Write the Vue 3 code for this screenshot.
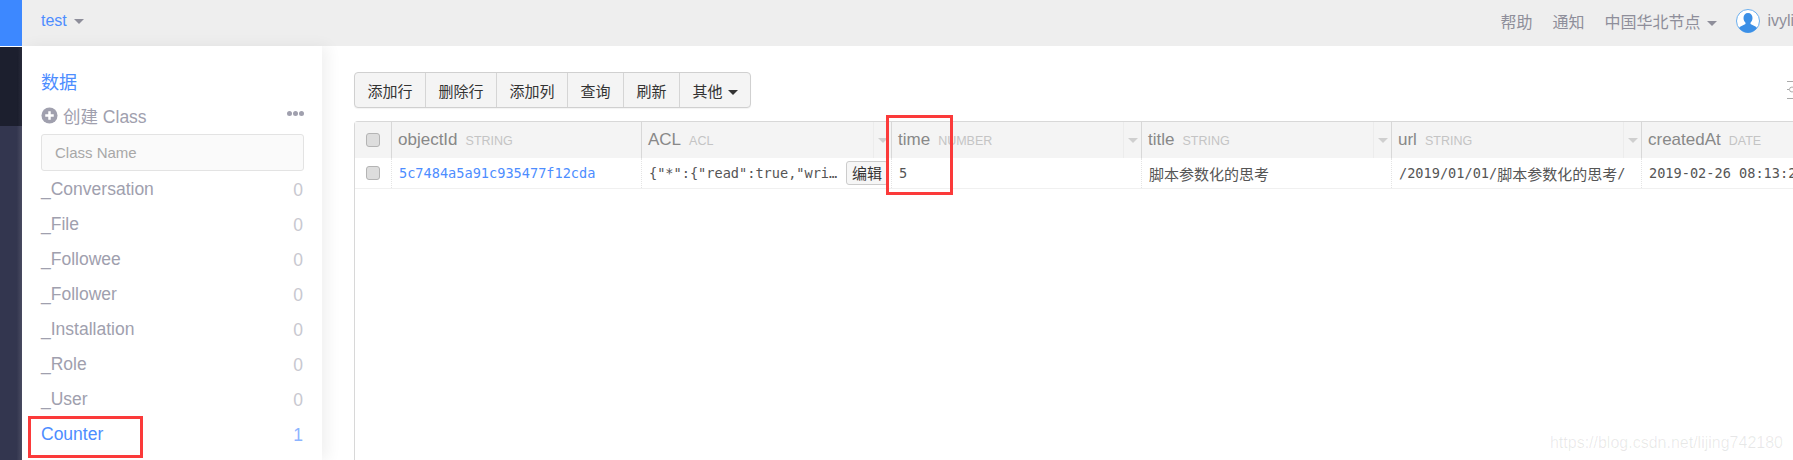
<script setup>
const classes = [
  { name: '_Conversation', count: 0 },
  { name: '_File', count: 0 },
  { name: '_Followee', count: 0 },
  { name: '_Follower', count: 0 },
  { name: '_Installation', count: 0 },
  { name: '_Role', count: 0 },
  { name: '_User', count: 0 },
  { name: 'Counter', count: 1, active: true },
]

const actions = ['添加行', '删除行', '添加列', '查询', '刷新']

const columns = [
  { name: 'objectId', type: 'STRING', noCaret: true },
  { name: 'ACL', type: 'ACL' },
  { name: 'time', type: 'NUMBER' },
  { name: 'title', type: 'STRING' },
  { name: 'url', type: 'STRING' },
  { name: 'createdAt', type: 'DATE' },
]
</script>

<template>
  <div class="page">
    <aside class="rail">
      <div class="rail-logo"></div>
      <div class="rail-dark"></div>
      <div class="rail-rest"></div>
    </aside>

    <div class="main">
      <header class="topbar">
        <a class="app-name">test<i class="caret"></i></a>
        <nav class="topnav">
          <span>帮助</span>
          <span>通知</span>
          <span>中国华北节点<i class="caret"></i></span>
          <span class="user">
            <svg class="avatar" viewBox="0 0 24 24" width="24" height="24">
              <circle cx="12" cy="12" r="11.500" fill="#fff" stroke="#6aaeee" stroke-width="1" />
              <path d="M12 4c-2.800 0-4.500 2.100-4.500 4.900 0 2 .9 3.700 2 4.800v1.400l-4.900 2.300c-.7.300-1.200.8-1.400 1.500a10.500 10.500 0 0 0 17.600 0c-.2-.7-.7-1.200-1.400-1.500l-4.900-2.300v-1.400c1.100-1.100 2-2.800 2-4.800 0-2.800-1.700-4.900-4.500-4.900z" fill="#3b8fe6" />
            </svg>
            ivylijing
          </span>
        </nav>
      </header>

      <div class="body">
        <section class="sidebar">
          <h2 class="side-title">数据</h2>
          <div class="create-row">
            <span class="create">
              <svg viewBox="0 0 18 18" width="17" height="17">
                <circle cx="9" cy="9" r="8.500" fill="#a0a0ae" />
                <path d="M9 4.500v9M4.500 9h9" stroke="#fff" stroke-width="2.600" />
              </svg>
              创建 Class
            </span>
            <span class="dots"><i></i><i></i><i></i></span>
          </div>
          <input class="class-input" placeholder="Class Name" />
          <ul class="class-list">
            <li v-for="c in classes" :key="c.name" :class="{ active: c.active }">
              <span>{{ c.name }}</span>
              <span class="count">{{ c.count }}</span>
            </li>
          </ul>
        </section>

        <section class="content">
          <div class="toolbar-row">
            <div class="btn-group">
              <button v-for="a in actions" :key="a">{{ a }}</button>
              <button>其他<i class="caret dark"></i></button>
            </div>
            <svg class="side-icon" viewBox="0 0 6 18" width="6" height="18">
              <path d="M0 .5h6M0 8.500h2M0 17.500h6" stroke="#aaa" fill="none" />
              <circle cx="5" cy="8.500" r="2.500" stroke="#aaa" fill="none" />
            </svg>
          </div>

          <div class="grid">
            <div class="grid-row head">
              <div class="check-cell"><span class="checkbox"></span></div>
              <div v-for="col in columns" :key="col.name" class="head-cell">
                <span class="col-name">{{ col.name }}</span>
                <span class="col-type">{{ col.type }}</span>
                <span v-if="!col.noCaret" class="col-menu"><i class="caret light"></i></span>
              </div>
            </div>
            <div class="grid-row data">
              <div class="check-cell"><span class="checkbox"></span></div>
              <div class="cell link">5c7484a5a91c935477f12cda</div>
              <div class="cell acl">
                <span class="acl-text">{"*":{"read":true,"write":true}}</span>
                <button class="edit">编辑</button>
              </div>
              <div class="cell">5</div>
              <div class="cell"><span class="cjk">脚本参数化的思考</span></div>
              <div class="cell">/2019/01/01/<span class="cjk">脚本参数化的思考</span>/</div>
              <div class="cell">2019-02-26 08:13:21</div>
            </div>
          </div>
        </section>
      </div>
    </div>

    <!-- red annotation boxes added over the screenshot -->
    <div class="mark mark-counter"></div>
    <div class="mark mark-time"></div>
    <div class="watermark">https://blog.csdn.net/lijing742180</div>
  </div>
</template>

<style>
html, body {
  margin: 0;
  background: #fff;
  overflow: hidden;
}
</style>

<style scoped>
.page {
  position: relative;
  display: flex;
  width: 1793px;
  height: 460px;
  overflow: hidden;
  background: #fff;
  font-family: "Liberation Sans", "Noto Sans CJK SC", sans-serif;
}

.rail {
  flex: 0 0 22px;
  display: flex;
  flex-direction: column;
}
.rail-logo {
  height: 46px;
  background: #3d88ff;
  border-bottom: 1px solid #fff;
}
.rail-dark {
  height: 79px;
  background: linear-gradient(90deg, #1c1f2e 80%, #2a2c3b 100%);
}
.rail-rest {
  flex: 1;
  background: linear-gradient(90deg, #33364f 75%, #4a4c62 100%);
}

.main {
  flex: 1;
  min-width: 0;
  display: flex;
  flex-direction: column;
}

.topbar {
  flex: 0 0 46px;
  box-sizing: border-box;
  display: flex;
  align-items: center;
  justify-content: space-between;
  padding: 0 0 5px 19px;
  background: #eeeeee;
  font-size: 16px;
}
.app-name {
  color: #4d8dff;
}
.topnav {
  display: flex;
  align-items: center;
  gap: 20px;
  color: #8e8e9a;
  font-size: 16px;
  white-space: nowrap;
  margin-right: -26px;
}
.user {
  display: flex;
  align-items: center;
  gap: 7px;
  margin-left: -1px;
}
.caret {
  display: inline-block;
  margin-left: 7px;
  vertical-align: 2px;
  border-left: 5px solid transparent;
  border-right: 5px solid transparent;
  border-top: 5px solid #8e8e9a;
}
.caret.dark {
  margin-left: 5px;
  border-top-color: #333;
}
.caret.light {
  margin: 0;
  border-top-color: #cfcfcf;
}

.body {
  flex: 1;
  display: flex;
  min-height: 0;
}

.sidebar {
  flex: 0 0 300px;
  box-sizing: border-box;
  padding: 25px 18px 0 19px;
  background: #fff;
  box-shadow: 6px 0 14px rgba(0, 0, 0, 0.06);
  z-index: 1;
}
.side-title {
  margin: 0;
  color: #4d8dff;
  font-size: 18px;
  font-weight: normal;
  line-height: 24px;
}
.create-row {
  display: flex;
  align-items: center;
  justify-content: space-between;
  margin-top: 8px;
  height: 24px;
  color: #a0a0ae;
  font-size: 17.500px;
}
.create {
  display: flex;
  align-items: center;
  gap: 5px;
}
.dots {
  display: flex;
  gap: 1px;
  margin-bottom: 3px;
}
.dots i {
  width: 5px;
  height: 5px;
  border-radius: 50%;
  background: #a0a0ae;
}
.class-input {
  display: block;
  box-sizing: border-box;
  width: 263px;
  height: 37px;
  margin-top: 7px;
  padding: 0 13px;
  background: #fafafa;
  border: 1px solid #e3e3e3;
  border-radius: 3px;
  font: 15px "Liberation Sans", sans-serif;
  outline: none;
}
.class-input::placeholder {
  color: #a8a8a8;
  opacity: 1;
}
.class-list {
  list-style: none;
  margin: 1px 0 0;
  padding: 0;
}
.class-list li {
  display: flex;
  align-items: center;
  justify-content: space-between;
  height: 35px;
  color: #a0a0ae;
  font-size: 17.500px;
}
.class-list .count {
  margin-right: 1px;
  margin-top: 2px;
  color: #c8c8d0;
}
.class-list li.active {
  color: #4d8dff;
}
.class-list li.active .count {
  color: #8cb4ff;
}

.content {
  flex: 1;
  min-width: 0;
  padding: 26px 0 0 32px;
}
.toolbar-row {
  display: flex;
  justify-content: space-between;
}
.btn-group {
  display: flex;
  height: 36px;
  box-sizing: border-box;
  border: 1px solid #d0d0d0;
  border-radius: 4px;
  background: #f4f4f4;
  box-shadow: 0 1px 1px rgba(0, 0, 0, 0.05);
}
.btn-group button {
  padding: 0 12.500px;
  border: 0;
  border-right: 1px solid #d5d5d5;
  background: none;
  color: #333;
  font: 15px "Noto Sans CJK SC", sans-serif;
  white-space: nowrap;
}
.btn-group button:last-child {
  border-right: 0;
}
.side-icon {
  margin-top: 9px;
}

.grid {
  width: 1500px;
  height: 400px;
  margin-top: 13px;
  border: 1px solid #d8d8d8;
  border-right: 0;
  border-radius: 4px 0 0 0;
}
.grid-row {
  display: flex;
}
.grid-row.head {
  height: 36px;
  background: #f4f4f4;
}
.grid-row.data {
  height: 30px;
  border-bottom: 1px solid #f0f0f0;
}
.check-cell {
  flex: 0 0 36px;
  display: flex;
  align-items: center;
  justify-content: center;
  box-sizing: border-box;
}
.checkbox {
  width: 12px;
  height: 12px;
  border: 1px solid #b4b4b4;
  border-radius: 3px;
  background: #ddd;
}
.head-cell {
  position: relative;
  flex: 0 0 250px;
  display: flex;
  align-items: center;
  box-sizing: border-box;
  padding-left: 6px;
  border-left: 1px solid #d8d8d8;
}
.col-name {
  color: #888;
  font-size: 17px;
}
.col-type {
  margin-left: 8px;
  margin-top: 2px;
  color: #c4c4c4;
  font-size: 12.500px;
}
.col-menu {
  position: absolute;
  top: 0;
  right: 0;
  bottom: 0;
  width: 17px;
  display: flex;
  align-items: center;
  justify-content: center;
  border-left: 1px solid #ececec;
}
.cell {
  flex: 0 0 250px;
  display: flex;
  align-items: center;
  box-sizing: border-box;
  padding-left: 7px;
  border-left: 1px dotted #e4e4e4;
  color: #555;
  font: 13.600px "DejaVu Sans Mono", "Noto Sans CJK SC", monospace;
  white-space: nowrap;
  overflow: hidden;
}
.cell .cjk {
  font-family: "Noto Sans CJK SC", sans-serif;
  font-size: 15px;
}
.cell.link {
  color: #4d8dff;
}
.acl-text {
  flex: 1;
  min-width: 0;
  overflow: hidden;
  text-overflow: ellipsis;
}
.edit {
  flex: none;
  height: 24px;
  margin: 0 3px 0 4px;
  padding: 0 5px;
  border: 1px solid #ccc;
  border-radius: 3px;
  background: #f6f6f6;
  color: #333;
  font: 15px "Noto Sans CJK SC", sans-serif;
  line-height: 20px;
}

.mark {
  position: absolute;
  box-sizing: border-box;
  border: 3px solid #fb3a3a;
  z-index: 2;
}
.mark-counter {
  left: 28px;
  top: 416px;
  width: 115px;
  height: 42px;
}
.mark-time {
  left: 886px;
  top: 115px;
  width: 67px;
  height: 80px;
}
.watermark {
  position: absolute;
  right: 10px;
  top: 434px;
  color: rgba(0, 0, 0, 0.09);
  font-size: 16px;
  z-index: 2;
}
</style>
